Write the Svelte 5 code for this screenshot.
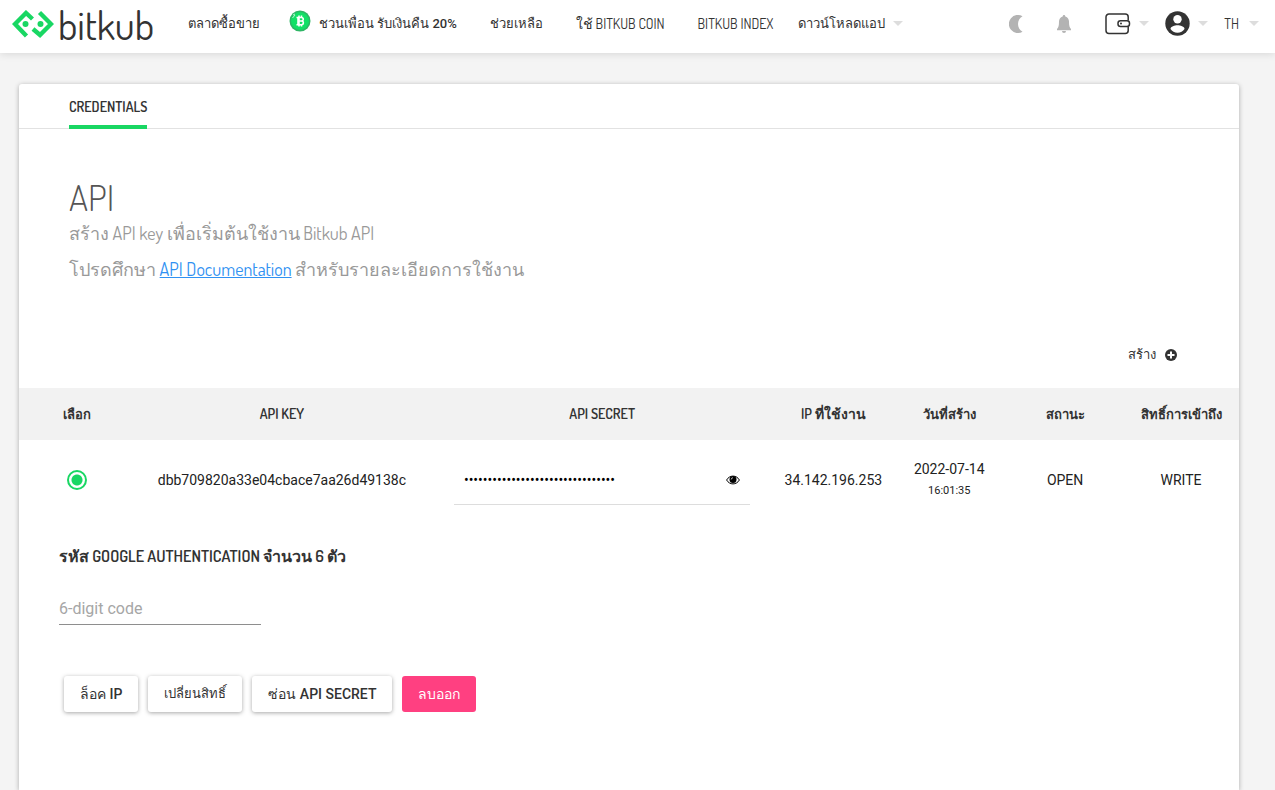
<script>
  const links = [
    { label: 'ตลาดซื้อขาย' },
    { label: 'ชวนเพื่อน รับเงินคืน 20%', coin: true },
    { label: 'ช่วยเหลือ' },
    { label: 'ใช้ BITKUB COIN', narrow: true },
    { label: 'BITKUB INDEX', narrow: true },
    { label: 'ดาวน์โหลดแอป', menu: true },
  ];

  const columns = [
    { title: 'เลือก', width: 9.5, thai: true },
    { title: 'API KEY', width: 24.1 },
    { title: 'API SECRET', width: 28.4 },
    { title: 'IP ที่ใช้งาน', width: 9.5 },
    { title: 'วันที่สร้าง', width: 9.5, thai: true },
    { title: 'สถานะ', width: 9.5, thai: true },
    { title: 'สิทธิ์การเข้าถึง', width: 9.5, thai: true },
  ];

  const keys = [
    {
      key: 'dbb709820a33e04cbace7aa26d49138c',
      secret: '00000000000000000000000000000000',
      ip: '34.142.196.253',
      date: '2022-07-14',
      time: '16:01:35',
      status: 'OPEN',
      access: 'WRITE',
    },
  ];

  let selected = $state(keys[0].key);
  let showSecret = $state(false);
  let code = $state('');
</script>

{#snippet caret()}
  <svg class="caret" width="10" height="5" viewBox="0 0 10 5"><path d="M0 0h10L5 5z" /></svg>
{/snippet}

<header>
  <a class="logo" href="#home">
    <svg width="42" height="28" viewBox="0 0 42 28" fill="none" stroke="#19d763" stroke-width="4.4">
      <path d="M20.5 9 14 3 3 14l11.5 12" />
      <path d="M27.5 2.5 39 14 28 25l-7-6" />
      <circle cx="13.5" cy="14" r="3" fill="#19d763" stroke="none" />
      <circle cx="28.5" cy="14" r="3" fill="#19d763" stroke="none" />
    </svg>
    <span>bitkub</span>
  </a>

  <nav>
    {#each links as link}
      <a href="#nav" class:narrow={link.narrow} class:coin={link.coin} class:menu={link.menu}>
        {#if link.coin}
          <svg width="22" height="22" viewBox="0 0 22 22">
            <circle cx="11" cy="11" r="10.5" fill="#2fb566" />
            <circle cx="11" cy="11" r="9" fill="#12e066" />
            <path d="M7.5 7.500h5a1.700 1.700 0 0 1 0 3.500H9m3.500 0a1.800 1.800 0 0 1 0 3.700h-5M9 7.500v7M10 5.500v11M12.500 5.500v2M12.500 14.500v2" fill="none" stroke="#fff" stroke-width="1.6" />
            <path d="M3.500 8 6 5M4 5l2-1" stroke="#b5f7cf" />
          </svg>
        {/if}
        {link.label}
        {#if link.menu}{@render caret()}{/if}
      </a>
    {/each}
  </nav>

  <div class="tools">
    <button aria-label="Dark mode">
      <svg width="14" height="18" viewBox="0 0 14 18"><path d="M13.5 1.300A9 9 0 1 0 13.5 16.700C7.500 13.500 7.500 4.500 13.5 1.300z" fill="#b3b3b3" /></svg>
    </button>
    <button class="bell" aria-label="Notifications">
      <svg width="14" height="18" viewBox="0 0 14 18"><path d="M7 0c.9 0 1.300.6 1.300 1.500C10.800 2.200 12 4.300 12 6.500c0 4 .5 6 2 7.500v1.200H0V14c1.500-1.500 2-3.500 2-7.500 0-2.200 1.200-4.300 3.700-5C5.700.6 6.100 0 7 0zM5 16h4a2 2 0 0 1-4 0z" fill="#b3b3b3" /></svg>
    </button>
    <button class="wallet" aria-label="Wallet">
      <svg width="26" height="22" viewBox="0 0 26 22" fill="none" stroke="#333" stroke-width="1.5">
        <path d="M23.200 7.500V4a3 3 0 0 0-3-3H4a3 3 0 0 0-3 3v13.500a3 3 0 0 0 3 3h16.200a3 3 0 0 0 3-3v-4" />
        <rect x="13" y="7.700" width="11.500" height="5.800" rx="2.5" />
        <circle cx="16" cy="10.600" r="1" fill="#333" stroke="none" />
      </svg>
      {@render caret()}
    </button>
    <button aria-label="Account">
      <svg width="25" height="25" viewBox="0 0 25 25">
        <circle cx="12.5" cy="12.5" r="12.2" fill="#333" />
        <circle cx="12.5" cy="8.300" r="4.200" fill="#fff" />
        <path d="M5.500 18c0-2.600 4.300-3.700 7-3.700s7 1.100 7 3.700c-1.500 2.400-4 3.800-7 3.800S7 20.400 5.500 18z" fill="#fff" />
      </svg>
      {@render caret()}
    </button>
    <button class="lang">TH {@render caret()}</button>
  </div>
</header>

<main>
  <div class="tabs">
    <button class="tab">CREDENTIALS</button>
  </div>

  <section class="intro">
    <h1>API</h1>
    <p>สร้าง API key เพื่อเริ่มต้นใช้งาน Bitkub API</p>
    <p>โปรดศึกษา <a href="#docs">API Documentation</a> สำหรับรายละเอียดการใช้งาน</p>
  </section>

  <div class="create">
    <button class="thai">
      สร้าง
      <svg width="12" height="12" viewBox="0 0 12 12"><circle cx="6" cy="6" r="6" fill="#333" /><path d="M6 2.500v7M2.500 6h7" stroke="#fff" stroke-width="2" /></svg>
    </button>
  </div>

  <table>
    <colgroup>
      {#each columns as column}
        <col style="width: {column.width}%" />
      {/each}
    </colgroup>
    <thead>
      <tr>
        {#each columns as column}
          <th class:thai={column.thai}>{column.title}</th>
        {/each}
      </tr>
    </thead>
    <tbody>
      {#each keys as item}
        <tr>
          <td><input type="radio" name="key" value={item.key} bind:group={selected} aria-label="Select key" /></td>
          <td>{item.key}</td>
          <td>
            <div class="secret">
              <input type={showSecret ? 'text' : 'password'} value={item.secret} readonly aria-label="API secret" />
              <button aria-label="Show secret" onclick={() => (showSecret = !showSecret)}>
                <svg width="14" height="10" viewBox="0 0 14 10">
                  <path d="M.6 5C3.500-.2 10.500-.2 13.400 5 10.500 10.200 3.500 10.200.6 5z" fill="none" stroke="#000" />
                  <circle cx="7" cy="4.500" r="3.500" />
                  <path d="M5.200 4.500A1.900 1.900 0 0 1 7 2.700" fill="none" stroke="#fff" stroke-width=".7" />
                </svg>
              </button>
            </div>
          </td>
          <td>{item.ip}</td>
          <td>{item.date}<small>{item.time}</small></td>
          <td>{item.status}</td>
          <td>{item.access}</td>
        </tr>
      {/each}
    </tbody>
  </table>

  <form onsubmit={(e) => e.preventDefault()}>
    <label for="code">รหัส GOOGLE AUTHENTICATION จำนวน 6 ตัว</label>
    <input id="code" placeholder="6-digit code" maxlength="6" bind:value={code} />
    <div class="actions">
      <button>ล็อค IP</button>
      <button class="thai">เปลี่ยนสิทธิ์</button>
      <button>ซ่อน API SECRET</button>
      <button class="danger">ลบออก</button>
    </div>
  </form>
</main>

<style>
  :global(body) {
    margin: 0;
    background: #f4f4f4;
    color: #333;
    font: 14px/20px Roboto, sans-serif;
  }

  button {
    border: 0;
    padding: 0;
    background: none;
    color: inherit;
    font: inherit;
    cursor: pointer;
  }

  svg {
    display: block;
    flex: none;
  }

  header {
    display: flex;
    align-items: center;
    height: 53px;
    padding: 0 16px 6px 12px;
    box-sizing: border-box;
    background: #fff;
    box-shadow: 0 1px 8px rgba(0, 0, 0, 0.12);
    white-space: nowrap;
  }

  .logo {
    display: flex;
    align-items: center;
    gap: 4px;
    width: 176px;
    color: #333;
    font: 400 40px/40px Dosis, sans-serif;
    text-decoration: none;
  }

  nav {
    display: flex;
    align-items: center;
    gap: 33px;
  }

  nav a {
    display: flex;
    align-items: center;
    gap: 8px;
    color: #333;
    font-size: 13px;
    font-weight: 500;
    text-decoration: none;
  }

  .coin {
    margin-left: -4px;
  }

  .coin svg {
    margin-bottom: 6px;
  }

  .menu {
    margin-left: -8px;
  }

  .narrow,
  .lang,
  .tab,
  h1,
  .intro p,
  th,
  label {
    font-family: Dosis, sans-serif;
  }

  nav .narrow {
    font-size: 14px;
    font-weight: 400;
  }

  .caret {
    fill: #ddd;
  }

  .tools {
    display: flex;
    align-items: center;
    margin-left: auto;
  }

  .tools button {
    display: flex;
    align-items: center;
    gap: 8px;
    margin-left: 16px;
  }

  .tools .lang {
    gap: 10px;
  }

  .tools .bell,
  .tools .wallet {
    margin-left: 34px;
  }

  main {
    min-height: 706px;
    margin: 31px 36px 0 19px;
    border-radius: 3px 3px 0 0;
    background: #fff;
    box-shadow: 0 1px 5px rgba(0, 0, 0, 0.3);
  }

  .tabs {
    display: flex;
    height: 44px;
    padding: 0 50px;
    border-bottom: 1px solid #e2e2e2;
  }

  .tab {
    height: 45px;
    padding-top: 4px;
    border-bottom: 4px solid #19d763;
    font-weight: 600;
  }

  .intro {
    padding: 50px 50px 0;
    color: #999;
  }

  h1 {
    margin: 0;
    color: #555;
    font-size: 36px;
    font-weight: 300;
    line-height: 36px;
  }

  .intro p {
    margin: 0;
    font-size: 18px;
    font-weight: 400;
    line-height: 36px;
  }

  .intro a {
    color: #3091f2;
  }

  .create {
    display: flex;
    justify-content: flex-end;
    padding: 58px 62px 23px;
  }

  .create button {
    display: flex;
    align-items: center;
    gap: 9px;
  }

  table {
    width: 100%;
    border-collapse: collapse;
    table-layout: fixed;
    text-align: center;
  }

  th {
    height: 52px;
    padding: 0;
    background: #f2f2f2;
    font-weight: 600;
    white-space: nowrap;
  }

  .thai {
    font-size: 13px;
  }

  td {
    height: 80px;
    padding: 0;
    color: #222;
  }

  small {
    display: block;
    padding-top: 2px;
    font-size: 11px;
    line-height: 20px;
  }

  input[type='radio'] {
    display: block;
    width: 20px;
    height: 20px;
    margin: 0 auto;
    border: 2px solid #19d763;
    border-radius: 50%;
    appearance: none;
  }

  input[type='radio']:checked {
    background: radial-gradient(circle, #19d763 5px, transparent 6px);
  }

  .secret {
    display: flex;
    align-items: center;
    height: 48px;
    margin: 0 25px;
    padding: 0 10px;
    border-bottom: 1px solid #ddd;
  }

  .secret input {
    flex: 1;
    min-width: 0;
    padding: 0;
    border: 0;
    outline: 0;
    background: none;
    color: #000;
    font: 14px/20px Roboto, sans-serif;
  }

  form {
    padding: 26px 40px;
  }

  label {
    display: block;
    font-size: 16px;
    font-weight: 600;
  }

  #code {
    display: block;
    width: 202px;
    height: 33px;
    margin-top: 26px;
    padding: 0;
    border: 0;
    border-bottom: 1px solid #8e8e8e;
    outline: 0;
    box-sizing: border-box;
    background: none;
    font: 16px/20px Roboto, sans-serif;
  }

  #code::placeholder {
    color: #a6a6a6;
  }

  .actions {
    display: flex;
    gap: 10px;
    margin-top: 51px;
    padding: 0 5px;
  }

  .actions button {
    height: 36px;
    padding: 0 16px;
    border-radius: 3px;
    background: #fff;
    box-shadow: 0 1px 4px rgba(0, 0, 0, 0.35);
    font-weight: 500;
  }

  .actions .danger {
    background: #ff4081;
    box-shadow: none;
    color: #fff;
  }
</style>
